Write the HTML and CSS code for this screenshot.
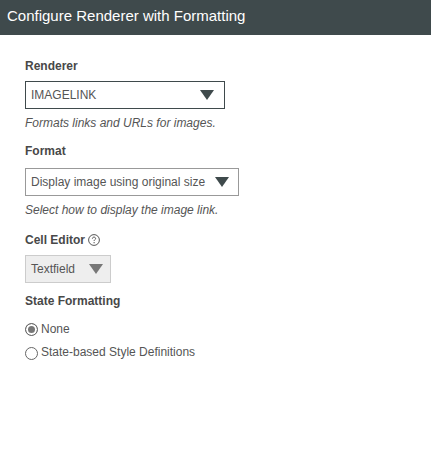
FILE: index.html
```html
<!DOCTYPE html>
<html lang="en">
<head>
    <meta charset="UTF-8">
    <meta name="viewport" content="width=device-width, initial-scale=1.0">
    <title>Configure Renderer with Formatting</title>
    <link rel="stylesheet" href="styles.css">
</head>
<body>
    <div class="header">Configure Renderer with Formatting</div>

    <div class="content">
        <div class="label">Renderer</div>
        <div class="select select-renderer">
            <span>IMAGELINK</span>
            <span class="arrow"></span>
        </div>
        <div class="hint">Formats links and URLs for images.</div>

        <div class="label label-format">Format</div>
        <div class="select select-format">
            <span>Display image using original size</span>
            <span class="arrow"></span>
        </div>
        <div class="hint">Select how to display the image link.</div>

        <div class="label label-editor">
            Cell Editor
            <svg class="help" width="12" height="12" viewBox="0 0 12 12">
                <circle cx="6" cy="6" r="5.4" fill="none" stroke="#444" stroke-width="0.9"/>
                <path d="M4.4 4.7c0-1 .7-1.6 1.6-1.6s1.6.6 1.6 1.4c0 1.1-1.5 1.2-1.5 2.5" fill="none" stroke="#444" stroke-width="0.9"/>
                <circle cx="6.1" cy="8.7" r="0.6" fill="#444"/>
            </svg>
        </div>
        <div class="select select-editor">
            <span>Textfield</span>
            <span class="arrow"></span>
        </div>

        <div class="label label-state">State Formatting</div>
        <div class="radio-row radio-none">
            <span class="radio checked"></span>
            <span>None</span>
        </div>
        <div class="radio-row radio-state">
            <span class="radio"></span>
            <span class="radio-text">State-based Style Definitions</span>
        </div>
    </div>
</body>
</html>
```

FILE: styles.css
```css
* {
    margin: 0;
    padding: 0;
    box-sizing: border-box;
}

body {
    font-family: 'Liberation Sans', Arial, sans-serif;
    background: #fff;
    color: #444;
    font-size: 12px;
}

.header {
    height: 35px;
    background: #3f4a4c;
    color: #fff;
    font-size: 15px;
    line-height: 31px;
    padding-left: 7px;
}

.content {
    padding: 24px 0 0 25px;
}

.label {
    font-weight: bold;
    line-height: 14px;
    color: #484848;
}

.label-format {
    margin-top: 14px;
}

.label-editor {
    display: flex;
    align-items: center;
    gap: 3px;
    margin-top: 16px;
}

.label-state {
    margin-top: 11px;
}

.select {
    display: flex;
    align-items: center;
    justify-content: space-between;
    height: 28px;
    margin-top: 8px;
    padding: 0 10px 0 5px;
    border: 1px solid #999;
    color: #555;
}

.select-renderer {
    width: 200px;
    border-color: #3f4a4c;
}

.select-format {
    width: 214px;
    margin-top: 10px;
    padding-right: 9px;
}

.select-editor {
    width: 86px;
    padding-right: 7px;
    background: #eee;
    border-color: #ccc;
}

.arrow {
    width: 0;
    height: 0;
    border-left: 7.5px solid transparent;
    border-right: 7.5px solid transparent;
    border-top: 10px solid #3f4a4c;
}

.select-editor .arrow {
    border-top-color: #777;
}

.hint {
    font-style: italic;
    line-height: 14px;
    margin-top: 7px;
    color: #555;
}

.radio-row {
    display: flex;
    align-items: center;
    gap: 3px;
    line-height: 14px;
    color: #555;
}

.radio-text {
    margin-top: -3px;
}

.radio-none {
    margin-top: 14px;
}

.radio-state {
    margin-top: 11px;
}

.radio {
    width: 13px;
    height: 13px;
    border: 1px solid #666;
    border-radius: 50%;
    background: #fff;
}

.radio.checked {
    background: #777;
    box-shadow: inset 0 0 0 2px #fff;
}
```
